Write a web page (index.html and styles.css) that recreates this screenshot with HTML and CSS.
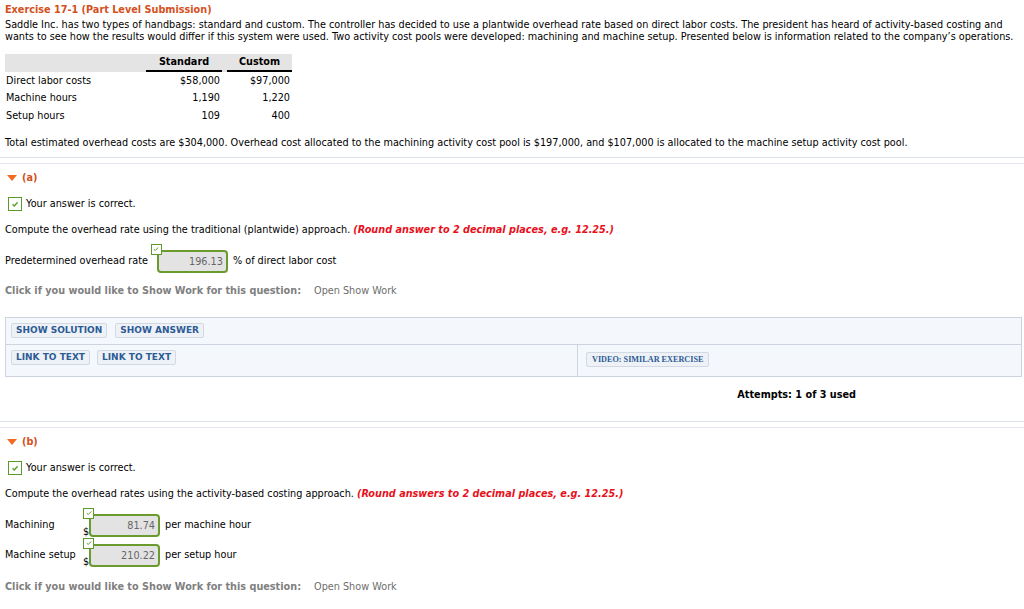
FILE: index.html
```html
<!DOCTYPE html>
<html lang="en">
<head>
  <meta charset="UTF-8" />
  <title>Exercise 17-1</title>
  <link rel="stylesheet" href="styles.css">
</head>
<body>

  <!-- Exercise intro -->
  <div class="block intro">
    <h1 class="ex-title">Exercise 17-1 (Part Level Submission)</h1>
    <p class="lead">Saddle Inc. has two types of handbags: standard and custom. The controller has decided to use a plantwide overhead rate based on direct labor costs. The president has heard of activity-based costing and wants to see how the results would differ if this system were used. Two activity cost pools were developed: machining and machine setup. Presented below is information related to the company’s operations.</p>

    <table class="data">
      <thead>
        <tr>
          <th class="label"></th>
          <th><div class="head-cell">Standard</div></th>
          <th><div class="head-cell">Custom</div></th>
        </tr>
      </thead>
      <tbody>
        <tr><td class="label">Direct labor costs</td><td>$58,000</td><td>$97,000</td></tr>
        <tr><td class="label">Machine hours</td><td>1,190</td><td>1,220</td></tr>
        <tr><td class="label">Setup hours</td><td>109</td><td>400</td></tr>
      </tbody>
    </table>

    <p class="total">Total estimated overhead costs are $304,000. Overhead cost allocated to the machining activity cost pool is $197,000, and $107,000 is allocated to the machine setup activity cost pool.</p>
  </div>

  <!-- Part (a) -->
  <div class="block part">
    <div class="part-head"><span class="caret"></span>(a)</div>
    <div class="correct">
      <span class="chk-box"><svg width="10" height="10" viewBox="0 0 10 10"><path d="M2.5 5.2 L4.3 7 L7.6 3.3" fill="none" stroke="#5b9a2e" stroke-width="1.3"/></svg></span>
      Your answer is correct.
    </div>
    <p class="question">Compute the overhead rate using the traditional (plantwide) approach. <em class="hint">(Round answer to 2 decimal places, e.g. 12.25.)</em></p>

    <div class="answer-row">
      <span class="answer-label wide">Predetermined overhead rate</span>
      <span class="answer-wrap">
        <span class="mini-chk"><svg width="8" height="8" viewBox="0 0 8 8"><path d="M1.8 4.2 L3.3 5.5 L6.2 2.5" fill="none" stroke="#5b9a2e" stroke-width="1"/></svg></span>
        <span class="answer-box">196.13</span>
      </span>
      <span class="unit">% of direct labor cost</span>
    </div>

    <p class="show-work"><strong>Click if you would like to Show Work for this question:</strong><span class="open-work">Open Show Work</span></p>

    <div class="tools">
      <div class="tools-row">
        <span class="tool-btn">SHOW SOLUTION</span>
        <span class="tool-btn">SHOW ANSWER</span>
      </div>
      <div class="tools-row split">
        <div class="tools-left">
          <span class="tool-btn">LINK TO TEXT</span>
          <span class="tool-btn">LINK TO TEXT</span>
        </div>
        <div class="tools-right">
          <span class="tool-btn video">VIDEO: SIMILAR EXERCISE</span>
        </div>
      </div>
    </div>

    <div class="attempts">Attempts: 1 of 3 used</div>
  </div>

  <!-- Part (b) -->
  <div class="block part">
    <div class="part-head"><span class="caret"></span>(b)</div>
    <div class="correct">
      <span class="chk-box"><svg width="10" height="10" viewBox="0 0 10 10"><path d="M2.5 5.2 L4.3 7 L7.6 3.3" fill="none" stroke="#5b9a2e" stroke-width="1.3"/></svg></span>
      Your answer is correct.
    </div>
    <p class="question">Compute the overhead rates using the activity-based costing approach. <em class="hint">(Round answers to 2 decimal places, e.g. 12.25.)</em></p>

    <div class="answer-row tight">
      <span class="answer-label">Machining</span>
      <span class="dollar">$</span>
      <span class="answer-wrap">
        <span class="mini-chk"><svg width="8" height="8" viewBox="0 0 8 8"><path d="M1.8 4.2 L3.3 5.5 L6.2 2.5" fill="none" stroke="#5b9a2e" stroke-width="1"/></svg></span>
        <span class="answer-box">81.74</span>
      </span>
      <span class="unit">per machine hour</span>
    </div>
    <div class="answer-row tight next">
      <span class="answer-label">Machine setup</span>
      <span class="dollar">$</span>
      <span class="answer-wrap">
        <span class="mini-chk"><svg width="8" height="8" viewBox="0 0 8 8"><path d="M1.8 4.2 L3.3 5.5 L6.2 2.5" fill="none" stroke="#5b9a2e" stroke-width="1"/></svg></span>
        <span class="answer-box">210.22</span>
      </span>
      <span class="unit">per setup hour</span>
    </div>

    <p class="show-work last"><strong>Click if you would like to Show Work for this question:</strong><span class="open-work">Open Show Work</span></p>
  </div>

</body>
</html>
```

FILE: styles.css
```css
body {
  margin: 0;
  font-family: "DejaVu Sans", Verdana, sans-serif;
  font-size: 9.7px;
  line-height: 12px;
  color: #000;
  background: #fff;
}

p {
  margin: 0;
}

.block {
  padding: 0 2px 0 5px;
  border-bottom: 1px solid #dce2eb;
}

.part {
  border-top: 1px solid #e2e6ee;
  margin-top: 5px;
}

/* Intro */

.intro {
  padding-top: 3px;
  padding-bottom: 8px;
}

.ex-title {
  margin: 0 0 3px;
  font-size: 9.7px;
  line-height: 13px;
  color: #d4501c;
}

.lead {
  padding-bottom: 11px;
  padding-right: 3px;
}

.data {
  border-collapse: collapse;
  margin-bottom: 12px;
}

.data th {
  background: #e4e4e4;
  padding: 2px 0 0;
  font-weight: bold;
  text-align: center;
}

.data th.label {
  width: 141px;
}

.head-cell {
  padding-bottom: 2px;
  border-bottom: 2px solid #000;
}

.data th:nth-child(2) {
  padding-right: 5px;
}

.data th:nth-child(2) .head-cell {
  width: 76px;
}

.data th:nth-child(3) .head-cell {
  width: 65px;
}

.data td {
  height: 17.5px;
  padding: 0 7px 0 0;
  text-align: right;
}

.data td:nth-child(3) {
  padding-right: 2px;
}

.data td.label {
  text-align: left;
  padding-left: 1px;
}

/* Parts */

.part-head {
  display: flex;
  align-items: center;
  padding: 8px 0 0 2px;
  font-weight: bold;
  color: #d4501c;
  line-height: 12px;
}

.caret {
  width: 0;
  height: 0;
  border-left: 5px solid transparent;
  border-right: 5px solid transparent;
  border-top: 6px solid #f26a21;
  margin-right: 5px;
}

.correct {
  display: flex;
  align-items: center;
  margin: 13px 0 0 3px;
  line-height: 14px;
}

.chk-box {
  display: inline-flex;
  align-items: center;
  justify-content: center;
  width: 12px;
  height: 12px;
  border: 1px solid #5b9a2e;
  margin-right: 4px;
  background: #fff;
}

.question {
  margin-top: 13px;
}

.hint {
  color: #e8101a;
  font-weight: bold;
}

.answer-row {
  display: flex;
  align-items: flex-end;
  margin-top: 8px;
}

.answer-row.next {
  margin-top: 1px;
}

.answer-label {
  align-self: center;
  padding-top: 6px;
}

.answer-label.wide {
  margin-right: 9px;
}

.tight .answer-label {
  width: 78px;
  flex-shrink: 0;
}

.dollar {
  width: 6px;
  line-height: 11px;
}

.answer-wrap {
  position: relative;
  padding-top: 6px;
}

.mini-chk {
  position: absolute;
  top: 0;
  left: -6px;
  width: 9px;
  height: 9px;
  border: 1px solid #5b9a2e;
  background: #fff;
  display: flex;
  align-items: center;
  justify-content: center;
}

.answer-box {
  display: block;
  box-sizing: border-box;
  width: 71px;
  height: 23px;
  padding: 0 3px;
  line-height: 19px;
  text-align: right;
  color: #666;
  background: #e3e3e3;
  border: 2px solid #6b9a2f;
  border-radius: 4px;
}

.unit {
  align-self: center;
  padding-top: 6px;
  margin-left: 5px;
}

.show-work {
  margin-top: 12px;
  color: #7a7a7a;
}

.show-work.last {
  margin-top: 14px;
  padding-bottom: 30px;
}

.show-work strong {
  color: #808080;
}

.open-work {
  margin-left: 13px;
  color: #6e6e6e;
}

/* Tool panel */

.tools {
  margin-top: 20px;
  border: 1px solid #cdd4e0;
  background: #f4f7fb;
}

.tools-row {
  display: flex;
  gap: 8px;
  padding: 5px 5px 6px;
}

.tools-row.split {
  border-top: 1px solid #cdd4e0;
  padding: 0;
  gap: 0;
}

.tools-left {
  display: flex;
  gap: 7px;
  width: 561px;
  padding: 5px 5px 11px;
  border-right: 1px solid #cdd4e0;
}

.tools-right {
  padding: 7px 8px 9px;
}

.tool-btn {
  display: inline-block;
  padding: 1px 4px 1px;
  font-size: 9px;
  line-height: 11px;
  font-weight: bold;
  color: #2d5b95;
  background: #eef2f7;
  border: 1px solid #d3d9e3;
  border-radius: 2px;
}

.tool-btn.video {
  font-family: "Liberation Serif", "Times New Roman", serif;
  font-size: 8.2px;
  line-height: 13px;
  padding: 0 5px;
}

.attempts {
  width: 851px;
  text-align: right;
  font-weight: bold;
  margin-top: 12px;
  padding-bottom: 20px;
}
```
